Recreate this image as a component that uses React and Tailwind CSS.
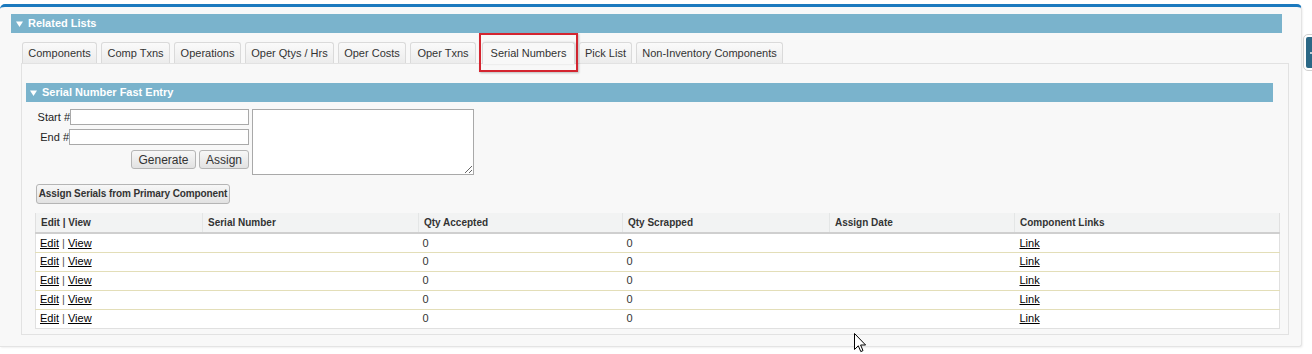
import React from "react";

const tabs = [
  { label: "Components", w: "w-[75px]" },
  { label: "Comp Txns", w: "w-[69px]" },
  { label: "Operations", w: "w-[67px]" },
  { label: "Oper Qtys / Hrs", w: "w-[89px]" },
  { label: "Oper Costs", w: "w-[68px]" },
  { label: "Oper Txns", w: "w-[66px]" },
  { label: "Serial Numbers", w: "w-[93px]", active: true },
  { label: "Pick List", w: "w-[53px]" },
  { label: "Non-Inventory Components", w: "w-[147px]" },
];

const cols = [
  { label: "Edit | View", w: 167 },
  { label: "Serial Number", w: 216 },
  { label: "Qty Accepted", w: 204 },
  { label: "Qty Scrapped", w: 207 },
  { label: "Assign Date", w: 185 },
  { label: "Component Links", w: 265 },
];

function SectionHeader({ title, className }) {
  return (
    <div className={"h-[19px] bg-[#7ab3cc] flex items-center text-white font-bold text-[11px] " + className}>
      <svg width="7" height="6" viewBox="0 0 7 6" className="mr-[5px]">
        <path d="M0 0.5 H7 L3.5 6 Z" fill="#ffffff" />
      </svg>
      <span>{title}</span>
    </div>
  );
}

function Btn({ children, className }) {
  return (
    <button
      className={
        "border border-[#b5b5b5] rounded-[3px] bg-[linear-gradient(#f7f7f7,#e2e2e2)] text-[#333] flex items-center justify-center leading-none whitespace-nowrap px-0 " +
        className
      }
    >
      {children}
    </button>
  );
}

export default function App() {
  const rows = [0, 1, 2, 3, 4];
  return (
    <div className="w-[1312px] h-[354px] bg-white relative overflow-hidden pt-[4px] font-['Liberation_Sans',Arial,sans-serif]">
      {/* Card */}
      <div className="w-[1302px] h-[343px] bg-[#f8f8f8] border-t-[3px] border-t-[#1b79be] border-r border-b border-r-[#e4e4e4] border-b-[#e4e4e4] rounded-t-[5px] rounded-br-[3px] shadow-[1px_1px_2px_rgba(0,0,0,0.06)] pt-[7px] pl-[11px]">
        <SectionHeader title="Related Lists" className="w-[1271px] pl-[5px]" />

        {/* Tabs */}
        <div className="mt-[9px] pl-[11px] h-[21px] flex items-end relative z-10">
          {tabs.map((t, i) => (
            <div
              key={t.label}
              className={
                t.w +
                " flex items-center justify-center text-[11px] text-[#333] rounded-t-[3px] border border-[#dadada] whitespace-nowrap " +
                (i === 0 ? "" : t.active ? "ml-[6px] " : "ml-[4px] ") +
                (t.active
                  ? "h-[22px] -mb-[1px] bg-[#f8f8f8] border-b-0 border-[#cfcfcf] shadow-[1px_0_2px_rgba(0,0,0,0.15)]"
                  : "h-[21px] bg-[linear-gradient(#fafafa,#ececec)] border-b-0")
              }
            >
              {t.label}
            </div>
          ))}
        </div>

        {/* Panel */}
        <div className="ml-[10px] w-[1268px] h-[272px] border border-[#e2e2e2] pt-[19px] pl-[4px]">
          <SectionHeader title="Serial Number Fast Entry" className="w-[1247px] pl-[4px]" />

          {/* Form */}
          <div className="mt-[7px] ml-[10px] flex">
            <div className="w-[213px] flex flex-col text-[11px] text-[#222]">
              <div className="h-[16px] flex items-center justify-end">
                <span>Start #</span>
                <input className="w-[179px] h-[16px] border border-[#a9a9a9] bg-white outline-none" />
              </div>
              <div className="h-[16px] mt-[4px] flex items-center justify-end">
                <span>End #</span>
                <input className="w-[180px] h-[16px] border border-[#a9a9a9] bg-white outline-none" />
              </div>
              <div className="mt-[5px] flex justify-end gap-[3px]">
                <Btn className="w-[65px] h-[19px] text-[12px]">Generate</Btn>
                <Btn className="w-[50px] h-[19px] text-[12px]">Assign</Btn>
              </div>
            </div>
            <textarea className="ml-[3px] w-[222px] h-[66px] border border-[#a9a9a9] bg-white outline-none resize" />
          </div>

          <Btn className="mt-[9px] ml-[10px] w-[194px] h-[20px] text-[10px] font-bold tracking-[-0.1px]">
            Assign Serials from Primary Component
          </Btn>

          {/* Table */}
          <table className="mt-[9px] ml-[9px] w-[1244px] table-fixed border-collapse bg-white border-l border-r border-b border-[#e0e0e0] text-[11px]">
            <colgroup>
              {cols.map((c) => (
                <col key={c.label} style={{ width: c.w }} />
              ))}
            </colgroup>
            <thead>
              <tr className="h-[20px] bg-[#f2f3f3] border-b-2 border-b-[#cfcfcf]">
                {cols.map((c, i) => (
                  <th
                    key={c.label}
                    className={
                      "text-left font-bold text-[10px] text-[#333] px-[5px] align-middle " +
                      (i === 0 ? "" : "border-l border-l-[#e4e6e6]")
                    }
                  >
                    {c.label}
                  </th>
                ))}
              </tr>
            </thead>
            <tbody>
              {rows.map((r) => (
                <tr key={r} className="h-[19px] border-b border-b-[#e3deb8] last:border-b-[#e0e0e0]">
                  <td className="px-[4px] text-black">
                    <span className="underline">Edit</span>
                    <span className="text-[#555]"> | </span>
                    <span className="underline">View</span>
                  </td>
                  <td className="px-[4px]"></td>
                  <td className="px-[4px] text-[#333]">0</td>
                  <td className="px-[4px] text-[#333]">0</td>
                  <td className="px-[4px]"></td>
                  <td className="px-[5px] text-black">
                    <span className="underline">Link</span>
                  </td>
                </tr>
              ))}
            </tbody>
          </table>
        </div>
      </div>

      {/* Red highlight around active tab */}
      <div className="absolute left-[479px] top-[33px] w-[99px] h-[39px] border-2 border-[#d42530] shadow-[1px_1px_2px_rgba(0,0,0,0.25)] pointer-events-none" />

      {/* Right edge side widget */}
      <div className="absolute left-[1303px] top-[34px] w-[12px] h-[37px] rounded-l-[5px] border border-[#d0d0d0] bg-white p-[2px] pr-0">
        <div className="w-full h-full bg-[#2b6886] rounded-l-[2px] flex items-center justify-end pr-[2px]">
          <div className="w-[2px] h-[2px] bg-white/70" />
        </div>
      </div>

      {/* Mouse cursor */}
      <svg className="absolute left-[854px] top-[333px]" width="13" height="20" viewBox="0 0 13 20">
        <path
          d="M0.5 0.5 L0.5 16.5 L4.3 12.8 L6.8 18.6 L9 17.6 L6.6 12 L11.6 12 Z"
          fill="#ffffff"
          stroke="#000000"
          strokeWidth="1"
          strokeLinejoin="round"
        />
      </svg>
    </div>
  );
}
